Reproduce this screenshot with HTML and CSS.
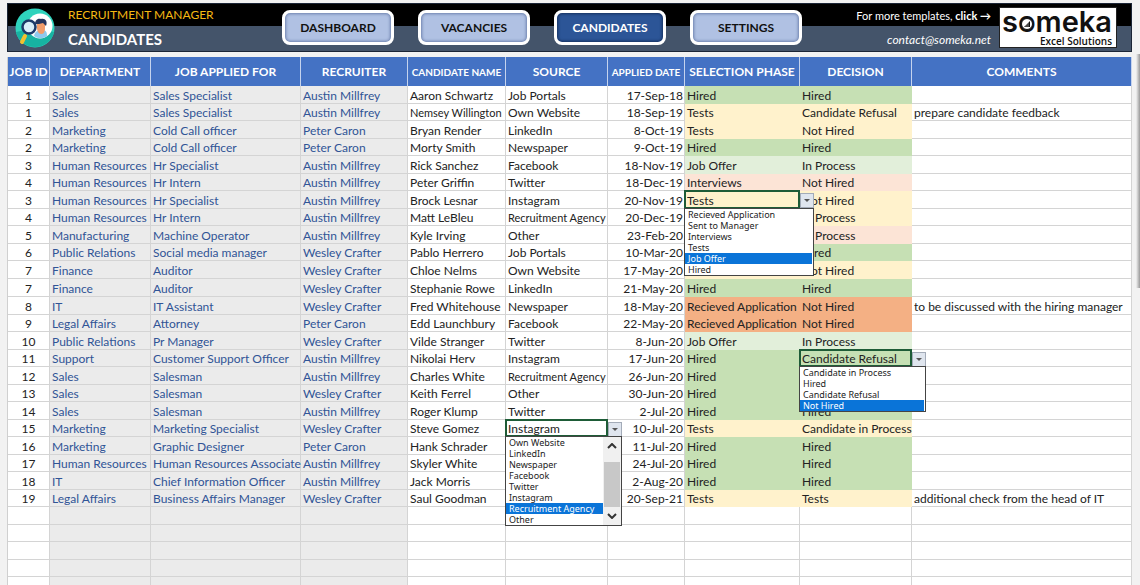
FILE: index.html
```html
<!DOCTYPE html>
<html lang="en">
<head>
  <meta charset="UTF-8">
  <title>Recruitment Manager - Candidates</title>
  <link rel="stylesheet" href="styles.css">
</head>
<body>
<div class="sheet">

  <header class="banner">
    <svg class="badge" viewBox="0 0 40 40">
      <circle cx="20" cy="20" r="19.500" fill="#2fd3bd"/>
      <path d="M1 24a19.500 19.500 0 0 0 38 0L20 20z" fill="#17b3a2"/>
      <circle cx="25" cy="18" r="12.500" fill="#fff"/>
      <path d="M19 28c1-5 4-6 8-6s5 2 5 6c-4 3-9 3-13 0z" fill="#8fc9ee"/>
      <path d="M22 14h8v6c0 5-2 6-4 6s-4-3-4-6z" fill="#f29d6b"/>
      <path d="M20 16c0-5 4-6 6-5 4-1 7 2 5 7l-3-3c-3 1-5 1-8 1z" fill="#26365f"/>
      <path d="M10 28l-3 6" stroke="#f3c12f" stroke-width="4" stroke-linecap="round"/>
      <circle cx="14" cy="19" r="6.500" fill="#d9effa" stroke="#1d3a6a" stroke-width="2.500"/>
    </svg>
    <div class="titles">
      <div class="app">RECRUITMENT MANAGER</div>
      <h1>CANDIDATES</h1>
    </div>
    <nav>
      <button>DASHBOARD</button>
      <button>VACANCIES</button>
      <button class="active">CANDIDATES</button>
      <button>SETTINGS</button>
    </nav>
    <div class="contact">
      <a href="#">For more templates, <b>click →</b></a>
      <a class="mail" href="mailto:contact@someka.net">contact@someka.net</a>
    </div>
    <div class="logo">
      <div class="name">someka
        <svg viewBox="0 0 12 12"><circle cx="6" cy="6" r="5.500" fill="#fff" stroke="#111"/><path d="M3 9h6V3z" fill="#111"/><path d="M5 3v6M7 3v6" stroke="#fff" stroke-width=".5"/></svg>
      </div>
      <div class="tagline">Excel Solutions</div>
    </div>
  </header>

  <table>
    <colgroup>
      <col class="c-id"><col class="c-dep"><col class="c-job"><col class="c-rec"><col class="c-name">
      <col class="c-src"><col class="c-date"><col class="c-phase"><col class="c-dec"><col>
    </colgroup>
    <thead>
      <tr><th>JOB ID</th><th>DEPARTMENT</th><th>JOB APPLIED FOR</th><th>RECRUITER</th><th class="small">CANDIDATE NAME</th><th>SOURCE</th><th class="small">APPLIED DATE</th><th>SELECTION PHASE</th><th>DECISION</th><th>COMMENTS</th></tr>
    </thead>
    <tbody>
      <tr class="hired"><td>1</td><td>Sales</td><td>Sales Specialist</td><td>Austin Millfrey</td><td>Aaron Schwartz</td><td>Job Portals</td><td>17-Sep-18</td><td>Hired</td><td>Hired</td><td></td></tr>
      <tr class="tests"><td>1</td><td>Sales</td><td>Sales Specialist</td><td>Austin Millfrey</td><td class="tight">Nemsey Willington</td><td>Own Website</td><td>18-Sep-19</td><td>Tests</td><td>Candidate Refusal</td><td>prepare candidate feedback</td></tr>
      <tr class="tests"><td>2</td><td>Marketing</td><td>Cold Call officer</td><td>Peter Caron</td><td>Bryan Render</td><td>LinkedIn</td><td>8-Oct-19</td><td>Tests</td><td>Not Hired</td><td></td></tr>
      <tr class="hired"><td>2</td><td>Marketing</td><td>Cold Call officer</td><td>Peter Caron</td><td>Morty Smith</td><td>Newspaper</td><td>9-Oct-19</td><td>Hired</td><td>Hired</td><td></td></tr>
      <tr class="offer"><td>3</td><td>Human Resources</td><td>Hr Specialist</td><td>Austin Millfrey</td><td>Rick Sanchez</td><td>Facebook</td><td>18-Nov-19</td><td>Job Offer</td><td>In Process</td><td></td></tr>
      <tr class="interviews"><td>4</td><td>Human Resources</td><td>Hr Intern</td><td>Austin Millfrey</td><td>Peter Griffin</td><td>Twitter</td><td>18-Dec-19</td><td>Interviews</td><td>Not Hired</td><td></td></tr>
      <tr class="tests"><td>3</td><td>Human Resources</td><td>Hr Specialist</td><td>Austin Millfrey</td><td>Brock Lesnar</td><td>Instagram</td><td>20-Nov-19</td>
        <td class="open">
          <select aria-label="Selection phase"><option>Tests</option></select>
          <span class="arrow"></span>
          <ul class="list">
            <li>Recieved Application</li><li>Sent to Manager</li><li>Interviews</li><li>Tests</li><li class="on">Job Offer</li><li>Hired</li>
          </ul>
        </td>
        <td>Not Hired</td><td></td></tr>
      <tr class="tests"><td>4</td><td>Human Resources</td><td>Hr Intern</td><td>Austin Millfrey</td><td>Matt LeBleu</td><td class="tight">Recruitment Agency</td><td>20-Dec-19</td><td></td><td>In Process</td><td></td></tr>
      <tr class="interviews"><td>5</td><td>Manufacturing</td><td>Machine Operator</td><td>Austin Millfrey</td><td>Kyle Irving</td><td>Other</td><td>23-Feb-20</td><td></td><td>In Process</td><td></td></tr>
      <tr class="hired"><td>6</td><td>Public Relations</td><td>Social media manager</td><td>Wesley Crafter</td><td>Pablo Herrero</td><td>Job Portals</td><td>10-Mar-20</td><td></td><td>Hired</td><td></td></tr>
      <tr class="tests"><td>7</td><td>Finance</td><td>Auditor</td><td>Wesley Crafter</td><td>Chloe Nelms</td><td>Own Website</td><td>17-May-20</td><td></td><td>Not Hired</td><td></td></tr>
      <tr class="hired"><td>7</td><td>Finance</td><td>Auditor</td><td>Wesley Crafter</td><td>Stephanie Rowe</td><td>LinkedIn</td><td>21-May-20</td><td>Hired</td><td>Hired</td><td></td></tr>
      <tr class="received"><td>8</td><td>IT</td><td>IT Assistant</td><td>Wesley Crafter</td><td>Fred Whitehouse</td><td>Newspaper</td><td>18-May-20</td><td>Recieved Application</td><td>Not Hired</td><td>to be discussed with the hiring manager</td></tr>
      <tr class="received"><td>9</td><td>Legal Affairs</td><td>Attorney</td><td>Peter Caron</td><td>Edd Launchbury</td><td>Facebook</td><td>22-May-20</td><td>Recieved Application</td><td>Not Hired</td><td></td></tr>
      <tr class="offer"><td>10</td><td>Public Relations</td><td>Pr Manager</td><td>Wesley Crafter</td><td>Vilde Stranger</td><td>Twitter</td><td>8-Jun-20</td><td>Job Offer</td><td>In Process</td><td></td></tr>
      <tr class="hired"><td>11</td><td>Support</td><td>Customer Support Officer</td><td>Austin Millfrey</td><td>Nikolai Herv</td><td>Instagram</td><td>17-Jun-20</td><td>Hired</td>
        <td class="open">
          <select aria-label="Decision"><option>Candidate Refusal</option></select>
          <span class="arrow"></span>
          <ul class="list">
            <li>Candidate in Process</li><li>Hired</li><li>Candidate Refusal</li><li class="on">Not Hired</li>
          </ul>
        </td>
        <td></td></tr>
      <tr class="hired"><td>12</td><td>Sales</td><td>Salesman</td><td>Austin Millfrey</td><td>Charles White</td><td class="tight">Recruitment Agency</td><td>26-Jun-20</td><td>Hired</td><td></td><td></td></tr>
      <tr class="hired"><td>13</td><td>Sales</td><td>Salesman</td><td>Wesley Crafter</td><td>Keith Ferrel</td><td>Other</td><td>30-Jun-20</td><td>Hired</td><td></td><td></td></tr>
      <tr class="hired"><td>14</td><td>Sales</td><td>Salesman</td><td>Austin Millfrey</td><td>Roger Klump</td><td>Twitter</td><td>2-Jul-20</td><td>Hired</td><td>Hired</td><td></td></tr>
      <tr class="tests"><td>15</td><td>Marketing</td><td>Marketing Specialist</td><td>Wesley Crafter</td><td>Steve Gomez</td>
        <td class="open">
          <select aria-label="Source"><option>Instagram</option></select>
          <span class="arrow"></span>
          <div class="list scroll">
            <ul>
              <li>Own Website</li><li>LinkedIn</li><li>Newspaper</li><li>Facebook</li><li>Twitter</li><li>Instagram</li><li class="on">Recruitment Agency</li><li>Other</li>
            </ul>
            <div class="bar">
              <svg viewBox="0 0 10 6"><path d="M1 5l4-4 4 4"/></svg>
              <span class="thumb"></span>
              <svg viewBox="0 0 10 6"><path d="M1 1l4 4 4-4"/></svg>
            </div>
          </div>
        </td>
        <td>10-Jul-20</td><td>Tests</td><td>Candidate in Process</td><td></td></tr>
      <tr class="hired"><td>16</td><td>Marketing</td><td>Graphic Designer</td><td>Peter Caron</td><td>Hank Schrader</td><td></td><td>11-Jul-20</td><td>Hired</td><td>Hired</td><td></td></tr>
      <tr class="hired"><td>17</td><td>Human Resources</td><td>Human Resources Associate</td><td>Austin Millfrey</td><td>Skyler White</td><td></td><td>24-Jul-20</td><td>Hired</td><td>Hired</td><td></td></tr>
      <tr class="hired"><td>18</td><td>IT</td><td>Chief Information Officer</td><td>Austin Millfrey</td><td>Jack Morris</td><td></td><td>2-Aug-20</td><td>Hired</td><td>Hired</td><td></td></tr>
      <tr class="tests"><td>19</td><td>Legal Affairs</td><td>Business Affairs Manager</td><td>Wesley Crafter</td><td>Saul Goodman</td><td></td><td>20-Sep-21</td><td>Tests</td><td>Tests</td><td>additional check from the head of IT</td></tr>
      <tr><td></td><td></td><td></td><td></td><td></td><td></td><td></td><td></td><td></td><td></td></tr>
      <tr><td></td><td></td><td></td><td></td><td></td><td></td><td></td><td></td><td></td><td></td></tr>
      <tr><td></td><td></td><td></td><td></td><td></td><td></td><td></td><td></td><td></td><td></td></tr>
      <tr><td></td><td></td><td></td><td></td><td></td><td></td><td></td><td></td><td></td><td></td></tr>
      <tr><td></td><td></td><td></td><td></td><td></td><td></td><td></td><td></td><td></td><td></td></tr>
    </tbody>
  </table>

  <div class="page-scroll"></div>
</div>
</body>
</html>
```
FILE: styles.css
```css
* { box-sizing: border-box; }
body { margin: 0; background: #f2f2f2; font-family: Lato, "Liberation Sans", sans-serif; font-size: 12px; color: #222; }
.sheet { position: relative; height: 100vh; overflow: hidden; padding: 3px 8px 0 7px; }

/* banner */
.banner { display: flex; align-items: center; height: 49px; padding: 0 14px 0 7px; background: linear-gradient(#000 22px, #44546a 22px); border: 1px solid #1b2536; }
.badge { width: 40px; height: 40px; }
.titles { width: 227px; padding-left: 13px; }
.app { color: #f6b913; font-size: 12px; line-height: 22px; }
h1 { margin: 0; color: #fff; font-size: 15px; line-height: 26px; }
nav { display: flex; gap: 24px; }
nav button { width: 112px; height: 35px; padding: 0; border: 3px solid #fff; border-radius: 8px; background: #b0c1e3; box-shadow: inset 0 0 3px 1px #6c81ad; font: bold 12px Lato, "Liberation Sans", sans-serif; color: #111; }
nav .active { background: #2c5597; box-shadow: inset 0 0 3px 1px #16305f; color: #fff; }
.contact { display: flex; flex-direction: column; align-items: flex-end; margin-left: auto; }
.contact a { color: #fff; font-size: 11px; line-height: 24px; text-decoration: none; white-space: nowrap; }
.contact .mail { font-size: 12px; font-style: italic; }
.logo { width: 118px; height: 41px; margin-left: 8px; padding-right: 4px; background: #fff; border: 1px solid #222; color: #111; text-align: right; }
.name { position: relative; height: 27px; font: 600 29px/28px Inter, sans-serif; }
.name svg { position: absolute; left: 21px; top: 10px; width: 12px; height: 12px; }
.tagline { font: 600 10px/12px "Open Sans", sans-serif; }

/* table */
table { width: 100%; margin-top: 5px; table-layout: fixed; border-collapse: separate; border-spacing: 0; background: #fff; border-left: 1px solid #d0d0d0; }
.c-id { width: 42px; }
.c-dep { width: 101px; }
.c-job { width: 150px; }
.c-rec { width: 107px; }
.c-name { width: 98px; }
.c-src { width: 102px; }
.c-date { width: 77px; }
.c-phase { width: 115px; }
.c-dec { width: 112px; }
th { height: 29px; padding: 0; background: #4472c4; border-right: 1px solid #c5d3ee; color: #fff; font-size: 12px; white-space: nowrap; }
th.small { font-size: 10px; }
td { height: 17px; padding: 1px 0 0 2px; border-right: 1px solid #d4d4d4; border-bottom: 1px solid #d4d4d4; line-height: 15px; white-space: nowrap; }
tr:nth-child(odd) td, tr:nth-child(12) td { height: 18px; }
td:nth-child(1) { padding: 1px 0 0; text-align: center; }
td:nth-child(2), td:nth-child(3), td:nth-child(4) { background: #ebebeb; color: #305496; }
td:nth-child(7) { padding: 1px 1px 0 0; text-align: right; }
td.tight { font-size: 11px; }

/* row colours by selection phase */
tr[class] td:nth-child(8), tr[class] td:nth-child(9) { background: var(--phase); border-color: var(--phase); }
.hired { --phase: #c6e0b4; }
.tests { --phase: #fff2cc; }
.offer { --phase: #e2efda; }
.interviews { --phase: #fce4d6; }
.received { --phase: #f4b084; }

/* cells with an open drop-down */
.open { position: relative; }
.open select { display: block; width: 100%; height: 15px; padding: 0; border: 0; appearance: none; background: none; font: inherit; color: inherit; }
.open::before { content: ""; position: absolute; inset: -1px; border: 2px solid #1e5c37; pointer-events: none; }
.arrow { position: absolute; left: 100%; top: 2px; width: 14px; height: 15px; margin-left: 1px; background: #dfe5ee; border: 1px solid #a3abb8; z-index: 1; }
.arrow::after { content: ""; position: absolute; left: 3px; top: 5px; border: 3px solid transparent; border-top-color: #555; }
.list { position: absolute; left: -1px; right: -15px; top: 100%; z-index: 2; margin: 0; padding: 0 1px 0 0; background: #fff; border: 1px solid #444; list-style: none; font: 9px/11px "Noto Sans", sans-serif; color: #222; }
.list ul { flex: 1; margin: 0; padding: 0; list-style: none; }
.list li { padding-left: 3px; }
.list .on { background: #0a74d8; color: #fff; }
.scroll { display: flex; padding: 0; }
.bar { display: flex; flex-direction: column; align-items: center; justify-content: space-between; width: 18px; background: #f0f0f0; }
.bar svg { width: 10px; height: 6px; margin: 6px 0; fill: none; stroke: #333; stroke-width: 2; }
.thumb { width: 16px; height: 45px; margin-top: 6px; background: #c8c8c8; }

.page-scroll { position: absolute; right: 0; top: 54px; width: 4px; height: 234px; background: linear-gradient(90deg, #f2f2f2, #999); }
```
